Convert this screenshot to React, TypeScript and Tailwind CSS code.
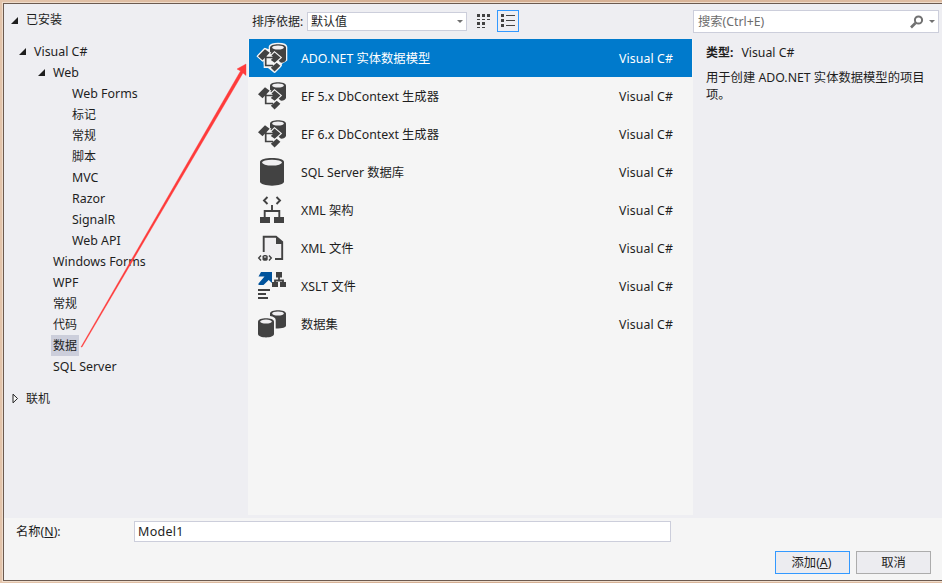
import { useState } from 'react'

type Node = { label: string; pad: string; open?: boolean; selected?: boolean }

const nodes: Node[] = [
  { label: 'Visual C#', pad: 'pl-[15px]', open: true },
  { label: 'Web', pad: 'pl-[34px]', open: true },
  { label: 'Web Forms', pad: 'pl-[66px]' },
  { label: '标记', pad: 'pl-[66px]' },
  { label: '常规', pad: 'pl-[66px]' },
  { label: '脚本', pad: 'pl-[66px]' },
  { label: 'MVC', pad: 'pl-[66px]' },
  { label: 'Razor', pad: 'pl-[66px]' },
  { label: 'SignalR', pad: 'pl-[66px]' },
  { label: 'Web API', pad: 'pl-[66px]' },
  { label: 'Windows Forms', pad: 'pl-[47px]' },
  { label: 'WPF', pad: 'pl-[47px]' },
  { label: '常规', pad: 'pl-[47px]' },
  { label: '代码', pad: 'pl-[47px]' },
  { label: '数据', pad: 'pl-[47px]', selected: true },
  { label: 'SQL Server', pad: 'pl-[47px]' },
]

const templates = [
  { name: 'ADO.NET 实体数据模型', icon: 'entity' },
  { name: 'EF 5.x DbContext 生成器', icon: 'entity' },
  { name: 'EF 6.x DbContext 生成器', icon: 'entity' },
  { name: 'SQL Server 数据库', icon: 'database' },
  { name: 'XML 架构', icon: 'schema' },
  { name: 'XML 文件', icon: 'xml' },
  { name: 'XSLT 文件', icon: 'xslt' },
  { name: '数据集', icon: 'dataset' },
]

function OpenArrow() {
  return <svg className="size-[7px] shrink-0" viewBox="0 0 7 7"><path d="M7 0V7H0Z" fill="#1e1e1e" /></svg>
}

function Icon({ name, active }: { name: string; active?: boolean }) {
  return (
    <svg className="size-8 shrink-0" viewBox="0 0 32 32" fill="#424242">
      {name === 'entity' && (
        <>
          {active && (
            <path d="M14 5C14 1 30 1 30 5V18L25 21L24 24L18.500 29.500L9 22V17L7 18L2.500 14L8.700 7.300L14 9Z"
              fill="#f5f5f5" stroke="#f5f5f5" strokeWidth="2.600" strokeLinejoin="round" />
          )}
          <path d="M14 5.500C14 1 30 1 30 5.500V17.500C30 19.500 28 20.500 25 20.700L14 11.500Z" />
          <ellipse cx="22" cy="5.500" rx="5.900" ry="2" fill="#f0eff1" />
          <path d="M9.700 13.500V24H16M9.700 15.500H17" fill="none" stroke="#f5f5f5" strokeWidth="4" />
          <g stroke="#f5f5f5" strokeWidth="2.200" paintOrder="stroke">
            <path d="M2 14.300L9 7.200L13.700 10.800L6.500 18.300Z" />
            <path d="M14.800 18L17.500 15.500L15.500 13.500L18.500 10.500L24.500 15.500L18.700 20.800Z" />
            <path d="M14.800 25.700L20.700 20.800L24.400 23.700L18.600 29.500Z" />
          </g>
          <path d="M9.700 13.500V23.500H17M9.700 15.500H19.500" fill="none" stroke="#424242" strokeWidth="1.700" />
        </>
      )}
      {name === 'database' && (
        <>
          <path d="M4 6C4 .7 28 .7 28 6V25.500C28 31 4 31 4 25.500Z" />
          <ellipse cx="16" cy="6.600" rx="10" ry="2.900" fill="#f0eff1" />
        </>
      )}
      {name === 'schema' && (
        <>
          <path d="M11.500 3L8 6.500L11.500 10M20.500 3L24 6.500L20.500 10M16 11V17M8.700 23V17H23.300V23" fill="none" stroke="#424242" strokeWidth="1.900" />
          <path d="M4 23H14V29H4ZM18 23H28V29H18Z" />
        </>
      )}
      {name === 'xml' && (
        <>
          <path d="M7 4H20L26 10V26H7Z" fill="#f0eff1" />
          <path d="M7.700 20V4.700H20L26.200 10V27H19" fill="none" stroke="#424242" strokeWidth="1.900" />
          <path d="M20 4L27 11V12H20Z" />
          <path d="M5 23.500L2.700 26L5 28.500M13 23.500L15.300 26L13 28.500" fill="none" stroke="#424242" strokeWidth="1.400" />
          <path d="M6.500 24.500C6.500 22.500 11.700 22.500 11.700 24.500V27.500C11.700 29.300 6.500 29.300 6.500 27.500Z" />
          <path d="M8 25H10.200" stroke="#f0eff1" />
        </>
      )}
      {name === 'xslt' && (
        <>
          <path d="M5 2H16V13L12.700 10L7.500 15H2.500V13.500L8.500 6.500H2.500Z" fill="#00539c" />
          <path d="M20 2H26V7.500H20ZM16 12H22V17H16ZM24 12H30V17H24ZM2 19H14V21H2ZM2 23H10V25H2ZM2 27H12V29H2Z" />
          <path d="M23 6V10.500M19 13V10.500H27V13" fill="none" stroke="#424242" strokeWidth="1.800" />
        </>
      )}
      {name === 'dataset' && (
        <>
          <path d="M14 5.500C14 1 30 1 30 5.500V17.500C30 19.500 27 20.500 19.700 20.500V12C19.700 10 17.500 8.500 14 8Z" />
          <ellipse cx="22" cy="5.500" rx="5.900" ry="2" fill="#f0eff1" />
          <path d="M2 13.500C2 9 18 9 18 13.500V26C18 30.500 2 30.500 2 26Z" />
          <ellipse cx="10" cy="13.600" rx="5.900" ry="2" fill="#f0eff1" />
        </>
      )}
    </svg>
  )
}

export default function App() {
  const [active, setActive] = useState(0)
  const [name, setName] = useState('Model1')

  return (
    <div className="relative h-[583px] w-[942px] overflow-hidden bg-linear-to-r from-[#e3c4ab] via-[#d3ad91] to-[#dfbea4] pt-[2px] pl-[2px] font-['Noto_Sans','Noto_Sans_CJK_SC',sans-serif] text-[12.3px] text-[#1e1e1e]">
      <div className="border-y border-l border-[#efdccb]">
        <div className="flex h-[578px] flex-col border-y border-l border-[#6b5a50] bg-[#f5f5f5]">
          <div className="flex h-[514px] shrink-0 bg-[#eeeef2]">
            <aside className="w-[244px] shrink-0">
              <div className="flex h-[32px] items-center gap-2 pl-[7px] text-[12px]"><OpenArrow />已安装</div>
              <div className="pt-[5px]">
                {nodes.map((n, i) => (
                  <div key={i} className={`flex h-[21px] items-center gap-2 ${n.pad}`}>
                    {n.open && <OpenArrow />}
                    <span className={`flex h-[21px] items-center px-0.5 text-[12px] whitespace-pre ${n.open ? '-ml-0.5' : ''} ${n.selected ? 'bg-[#cccedb]' : ''}`}>
                      {/[a-z]/i.test(n.label) ? <span className="pt-[2px] text-[12.4px]">{n.label}</span> : n.label}
                    </span>
                  </div>
                ))}
              </div>
              <div className="mt-[11px] flex h-[21px] items-center pl-[8px] text-[12px]">
                <svg className="mr-[7px] h-[11px] w-[7px]" viewBox="0 0 7 11"><path d="M1 1.200L5.500 5.500L1 9.800Z" fill="#fff" stroke="#1e1e1e" /></svg>
                联机
              </div>
            </aside>

            <main className="flex w-[445px] shrink-0 flex-col">
              <div className="flex h-[35px] items-center pl-[4px] text-[12px]">
                <span className="w-[55px] whitespace-nowrap">排序依据:</span>
                <div className="flex h-[19px] w-[160px] items-center justify-between border border-[#cccedb] bg-white pr-[3px] pl-[3px]">
                  默认值
                  <svg className="h-[3px] w-[6px]" viewBox="0 0 6 3"><path d="M0 0H6L3 3Z" fill="#717171" /></svg>
                </div>
                <svg className="-mt-[2px] ml-[10px] size-[14px]" viewBox="0 0 14 14" fill="#424242">
                  <path d="M0 0h3v3H0zM5 0h3v3H5zM10 0h3v3h-3zM0 5h3v1H0zM5 5h3v1H5zM10 5h3v1h-3zM0 8h3v3H0zM5 8h3v3H5zM0 13h3v1H0zM5 13h3v1H5z" />
                </svg>
                <div className="-mt-px ml-[6px] flex size-[22px] items-center justify-center border border-[#3399ff]">
                  <svg className="size-[14px]" viewBox="0 0 14 14" fill="#424242">
                    <path d="M0 0h3v3H0zM0 5h3v3H0zM0 10h3v3H0zM5 1h9v1H5zM5 6h9v1H5zM5 11h9v1H5z" />
                  </svg>
                </div>
              </div>
              <ul className="h-[476px] bg-[#f5f5f5] px-px">
                {templates.map((t, i) => (
                  <li key={t.name} onClick={() => setActive(i)}
                    className={`flex h-[38px] items-center pr-[19px] pl-[7px] ${i === active ? 'bg-[#007acc] text-white' : ''}`}>
                    <Icon name={t.icon} active={i === active} />
                    <span className="ml-[13px] flex-1 pt-[2px]">{t.name}</span>
                    <span className="pt-[2px] tracking-[0.1px]">Visual C#</span>
                  </li>
                ))}
              </ul>
            </main>

            <section className="flex-1 pt-[6px]">
              <div className="flex h-[23px] w-[246px] items-center border border-[#cccedb] bg-white pl-[4px] text-[#6d6d6d]">
                <span className="flex-1 pt-px">搜索(Ctrl+E)</span>
                <svg className="size-[14px]" viewBox="0 0 14 14" fill="none" stroke="#717171">
                  <circle cx="8.500" cy="5" r="3.600" strokeWidth="2" /><path d="M5.500 8L1 12.500" strokeWidth="2.600" />
                </svg>
                <svg className="mr-[3px] ml-[5px] h-[3px] w-[6px]" viewBox="0 0 6 3"><path d="M0 0H6L3 3Z" fill="#717171" /></svg>
              </div>
              <div className="pt-[11px] pl-[13px] leading-[17px]">
                <p><b className="mr-[8px] text-[12px]">类型:</b>Visual C#</p>
                <p className="mt-[8px] w-[222px]">用于创建 ADO.NET 实体数据模型的项目项。</p>
              </div>
            </section>
          </div>

          <div className="flex h-[27px] shrink-0 items-center pl-[12px]">
            <label className="w-[118px] pt-px">名称(<u>N</u>):</label>
            <input value={name} onChange={e => setName(e.target.value)}
              className="h-[21px] w-[537px] border border-[#cccedb] bg-white px-[3px] text-[12.5px] tracking-[0.3px] outline-none" />
          </div>
          <div className="flex justify-end gap-[6px] pt-[6px] pr-[11px]">
            <button className="h-[23px] w-[75px] border border-[#3399ff] bg-[#ececf0] pt-px pr-[2px]">添加(<u>A</u>)</button>
            <button className="h-[23px] w-[75px] border border-[#acacac] bg-[#ececf0] pt-px">取消</button>
          </div>
        </div>
      </div>

      {/* pointer from the 数据 node to the selected template */}
      <svg className="pointer-events-none absolute top-0 left-0 h-[583px] w-[942px]" viewBox="0 0 942 583">
        <path d="M81 347L240.500 71L237 69L246 64V75.500L243 73L82 347Z" fill="#ff3b3b" stroke="#ff3b3b" strokeWidth=".4" />
      </svg>
    </div>
  )
}
